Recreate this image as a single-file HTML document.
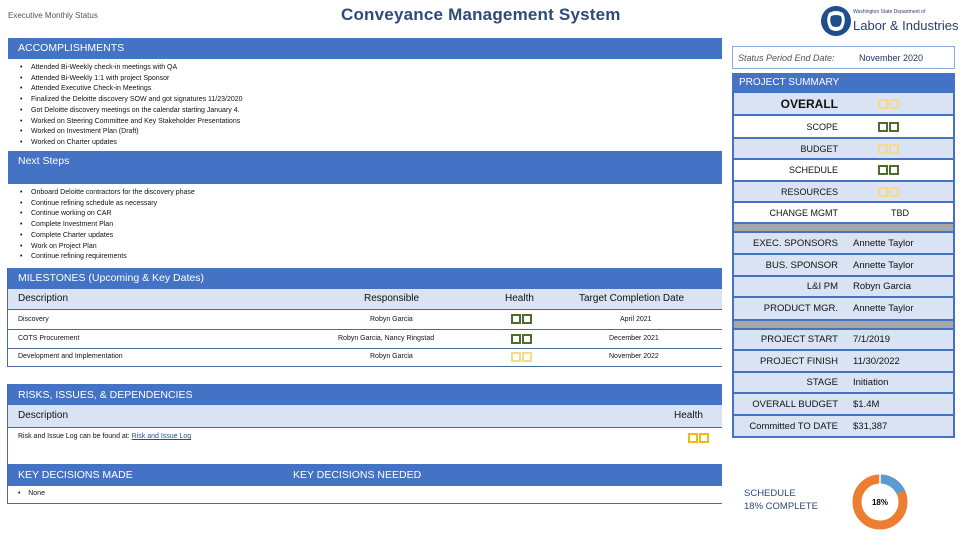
<!DOCTYPE html>
<html><head><meta charset="utf-8"><style>
*{margin:0;padding:0;box-sizing:border-box}
body{width:960px;height:540px;position:relative;background:#fff;font-family:"Liberation Sans",sans-serif;overflow:hidden;color:#111}
.a{position:absolute}
.hd{position:absolute;background:#4472c4;color:#fff;font-size:10.5px;padding-left:10px}
.li{position:absolute;left:20px;font-size:7px;line-height:10.7px;white-space:nowrap}
.li div:before{content:"•";display:inline-block;width:11px}
.row{position:absolute;left:8px;width:714px;border-bottom:1px solid #4a6a9a;font-size:7px}
.hs{display:inline-block;width:10px;height:10px;border:2px solid #4e6b30;margin:0 0.5px;vertical-align:top}
.y .hs{border-color:#f6dc8a}
.yy .hs{border-color:#eebc10}
.rs{position:absolute;left:732px;width:223px;border-left:2px solid #4472c4;border-right:2px solid #4472c4;border-bottom:2px solid #4472c4;font-size:9.5px}
.rs .l{position:absolute;right:115px;top:0;bottom:0;display:flex;align-items:center}
.rs .v{position:absolute;left:119px;top:0;bottom:0;display:flex;align-items:center}
.rs .h{position:absolute;left:143px;top:0;bottom:0;display:flex;align-items:center}
.b{background:#dae3f3}
</style></head><body>
<div class="a" style="left:8px;top:11px;font-size:8px;color:#555">Executive Monthly Status</div>
<div class="a" style="left:341px;top:5px;font-size:17px;font-weight:bold;color:#2e4a7a;letter-spacing:0.2px">Conveyance Management System</div>
<svg class="a" style="left:820px;top:5px" width="32" height="32" viewBox="0 0 32 32"><circle cx="16" cy="16" r="15" fill="#1f4e8c"/><path d="M9 8 Q16 4 23 8 Q27 16 22 24 Q16 28 10 24 Q5 16 9 8Z" fill="#fff"/><path d="M11 11 Q16 9 21 11 Q23 16 20 21 Q16 23 12 21 Q9 16 11 11Z" fill="#1f4e8c"/></svg>
<div class="a" style="left:853px;top:9px;font-size:5px;color:#2a3f6a">Washington State Department of</div>
<div class="a" style="left:853px;top:18px;font-size:13px;color:#2a3f6a">Labor &amp; Industries</div>

<div class="hd" style="left:8px;top:38px;width:714px;height:21px;line-height:20px">ACCOMPLISHMENTS</div>
<div class="li" style="top:63px"><div>Attended Bi-Weekly check-in meetings with QA</div><div>Attended Bi-Weekly 1:1 with project Sponsor</div><div>Attended Executive Check-in Meetings</div><div>Finalized the Deloitte discovery SOW and got signatures 11/23/2020</div><div>Got Deloitte discovery meetings on the calendar starting January 4.</div><div>Worked on Steering Committee and Key Stakeholder Presentations</div><div>Worked on Investment Plan (Draft)</div><div>Worked on Charter updates</div></div>
<div class="hd" style="left:8px;top:151px;width:714px;height:33px;line-height:21px">Next Steps</div>
<div class="li" style="top:188px"><div>Onboard Deloitte contractors for the discovery phase</div><div>Continue refining schedule as necessary</div><div>Continue working on CAR</div><div>Complete Investment Plan</div><div>Complete Charter updates</div><div>Work on Project Plan</div><div>Continue refining requirements</div></div>

<div class="hd" style="left:8px;top:268px;width:714px;height:21px;line-height:20px">MILESTONES (Upcoming &amp; Key Dates)</div>
<div style="position:absolute;left:7px;top:268px;width:1px;height:99px;background:#4a6a9a"></div>
<div class="row b" style="top:289px;height:21px;font-size:10px"><span class="a" style="left:10px;top:4px">Description</span><span class="a" style="left:356px;top:4px">Responsible</span><span class="a" style="left:497px;top:4px">Health</span><span class="a" style="left:571px;top:4px">Target Completion Date</span></div>
<div class="row" style="top:310px;height:20px"><span class="a" style="left:10px;top:6px">Discovery</span><span class="a" style="left:362px;top:6px">Robyn Garcia</span><span class="a" style="left:502px;top:4px"><i class="hs"></i><i class="hs"></i></span><span class="a" style="left:612px;top:6px">April 2021</span></div>
<div class="row" style="top:330px;height:19px"><span class="a" style="left:10px;top:5px">COTS Procurement</span><span class="a" style="left:330px;top:5px">Robyn Garcia, Nancy Ringstad</span><span class="a" style="left:502px;top:4px"><i class="hs"></i><i class="hs"></i></span><span class="a" style="left:601px;top:5px">December 2021</span></div>
<div class="row y" style="top:349px;height:18px"><span class="a" style="left:10px;top:4px">Development and Implementation</span><span class="a" style="left:362px;top:4px">Robyn Garcia</span><span class="a" style="left:502px;top:3px"><i class="hs"></i><i class="hs"></i></span><span class="a" style="left:601px;top:4px">November 2022</span></div>

<div class="hd" style="left:8px;top:384px;width:714px;height:21px;line-height:22px">RISKS, ISSUES, &amp; DEPENDENCIES</div>
<div style="position:absolute;left:7px;top:384px;width:1px;height:120px;background:#4a6a9a"></div>
<div class="row b" style="top:405px;height:23px;font-size:10px"><span class="a" style="left:10px;top:5px">Description</span><span class="a" style="left:666px;top:5px">Health</span></div>
<div class="row yy" style="top:428px;height:36px;border:none"><span class="a" style="left:10px;top:5px">Risk and Issue Log can be found at: <u style="color:#1f4ea0">Risk and Issue Log</u></span><span class="a" style="left:679px;top:5px"><i class="hs"></i><i class="hs"></i></span></div>
<div class="hd" style="left:8px;top:464px;width:714px;height:22px;line-height:22px">KEY DECISIONS MADE<span class="a" style="left:285px">KEY DECISIONS NEEDED</span></div>
<div class="row" style="top:486px;height:18px"><span class="a" style="left:10px;top:4px">•&nbsp;&nbsp;&nbsp;&nbsp;None</span></div>

<div class="a" style="left:732px;top:46px;width:223px;height:23px;border:1px solid #8eaadb;font-size:9px"><i class="a" style="left:5px;top:6px;color:#555">Status Period End Date:</i><span class="a" style="left:126px;top:6px;color:#1f3864">November 2020</span></div>
<div class="hd" style="left:732px;top:73px;width:223px;height:20px;line-height:20px;font-size:10px;padding-left:7px">PROJECT SUMMARY</div>
<div class="rs b y" style="top:93px;height:23px;font-size:12px;font-weight:bold"><span class="l">OVERALL</span><span class="h"><i class="hs"></i><i class="hs"></i></span></div>
<div class="rs" style="top:116px;height:23px;font-size:9px"><span class="l">SCOPE</span><span class="h"><i class="hs"></i><i class="hs"></i></span></div>
<div class="rs b y" style="top:139px;height:21px;font-size:9px"><span class="l">BUDGET</span><span class="h"><i class="hs"></i><i class="hs"></i></span></div>
<div class="rs" style="top:160px;height:22px;font-size:9px"><span class="l">SCHEDULE</span><span class="h"><i class="hs"></i><i class="hs"></i></span></div>
<div class="rs b y" style="top:182px;height:21px;font-size:9px"><span class="l">RESOURCES</span><span class="h"><i class="hs"></i><i class="hs"></i></span></div>
<div class="rs" style="top:203px;height:21px;font-size:9px"><span class="l">CHANGE MGMT</span><span class="h" style="left:157px">TBD</span></div>
<div class="rs" style="top:224px;height:9px;background:#a6a6a6"></div>
<div class="rs b" style="top:233px;height:22px"><span class="l">EXEC. SPONSORS</span><span class="v">Annette Taylor</span></div>
<div class="rs b" style="top:255px;height:22px"><span class="l">BUS. SPONSOR</span><span class="v">Annette Taylor</span></div>
<div class="rs b" style="top:277px;height:21px"><span class="l">L&amp;I PM</span><span class="v">Robyn Garcia</span></div>
<div class="rs b" style="top:298px;height:23px"><span class="l">PRODUCT MGR.</span><span class="v">Annette Taylor</span></div>
<div class="rs" style="top:321px;height:9px;background:#a6a6a6"></div>
<div class="rs b" style="top:330px;height:21px"><span class="l">PROJECT START</span><span class="v">7/1/2019</span></div>
<div class="rs b" style="top:351px;height:22px"><span class="l">PROJECT FINISH</span><span class="v">11/30/2022</span></div>
<div class="rs b" style="top:373px;height:21px"><span class="l">STAGE</span><span class="v">Initiation</span></div>
<div class="rs b" style="top:394px;height:22px"><span class="l">OVERALL BUDGET</span><span class="v">$1.4M</span></div>
<div class="rs b" style="top:416px;height:22px"><span class="l">Committed TO DATE</span><span class="v">$31,387</span></div>

<div class="a" style="left:744px;top:487px;font-size:9.5px;color:#2e4a7a;line-height:13px">SCHEDULE<br>18% COMPLETE</div>
<svg class="a" style="left:852px;top:474px" width="56" height="56" viewBox="0 0 56 56"><circle cx="28" cy="28" r="23" fill="none" stroke="#ed7d31" stroke-width="9"/><circle cx="28" cy="28" r="23" fill="none" stroke="#5b9bd5" stroke-width="9" stroke-dasharray="26 200" transform="rotate(-90 28 28)"/><line x1="28" y1="0" x2="28" y2="10" stroke="#fff" stroke-width="1.5"/><text x="28" y="31" font-size="8" text-anchor="middle" font-family="Liberation Sans" font-weight="bold">18%</text></svg>
</body></html>
